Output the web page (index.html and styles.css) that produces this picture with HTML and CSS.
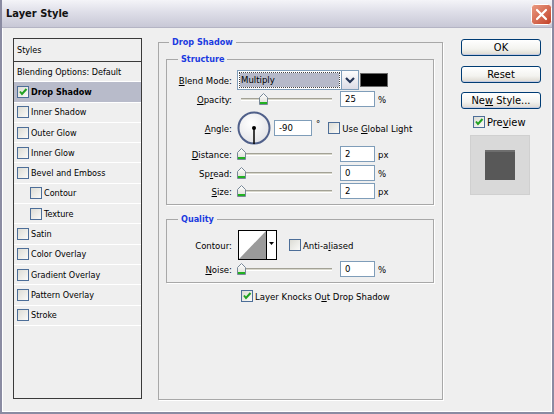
FILE: index.html
```html
<!DOCTYPE html>
<html lang="en">
<head>
    <meta charset="UTF-8">
    <title>Layer Style</title>
    <link rel="stylesheet" href="styles.css">
</head>
<body>
    <div class="window">
        <div class="titlebar">
            <span class="title">Layer Style</span>
            <svg class="close" width="21" height="21" viewBox="0 0 21 21">
                <defs>
                    <linearGradient id="cg" x1="0" y1="0" x2="1" y2="1">
                        <stop offset="0" stop-color="#eb9c84"/>
                        <stop offset="1" stop-color="#c23f26"/>
                    </linearGradient>
                </defs>
                <rect x="0.5" y="0.5" width="20" height="20" rx="3" fill="url(#cg)" stroke="#fff"/>
                <path d="M6 6 L15 15 M15 6 L6 15" stroke="#fff" stroke-width="2.2" stroke-linecap="round"/>
            </svg>
        </div>
        <div class="content">
            <div class="styles-list">
                <div class="list-head">Styles</div>
                <div class="item">Blending Options: Default</div>
                <div class="item selected"><span class="cb on"></span><b>Drop Shadow</b></div>
                <div class="item"><span class="cb"></span>Inner Shadow</div>
                <div class="item"><span class="cb"></span>Outer Glow</div>
                <div class="item"><span class="cb"></span>Inner Glow</div>
                <div class="item"><span class="cb"></span>Bevel and Emboss</div>
                <div class="item indent"><span class="cb"></span>Contour</div>
                <div class="item indent"><span class="cb"></span>Texture</div>
                <div class="item"><span class="cb"></span>Satin</div>
                <div class="item"><span class="cb"></span>Color Overlay</div>
                <div class="item"><span class="cb"></span>Gradient Overlay</div>
                <div class="item"><span class="cb"></span>Pattern Overlay</div>
                <div class="item"><span class="cb"></span>Stroke</div>
            </div>

            <fieldset class="group main">
                <legend>Drop Shadow</legend>

                <fieldset class="group sub structure">
                    <legend>Structure</legend>
                    <div class="row blend">
                        <span class="lbl"><u>B</u>lend Mode:</span>
                        <div class="select">
                            <div class="sel-field"><span class="sel-text">Multiply</span></div>
                            <div class="sel-btn">
                                <svg width="16" height="18" viewBox="0 0 16 18"><path d="M4 7 L8 11 L12 7" fill="none" stroke="#233456" stroke-width="2.2"/></svg>
                            </div>
                        </div>
                        <span class="swatch"></span>
                    </div>
                    <div class="row r-opacity">
                        <span class="lbl"><u>O</u>pacity:</span>
                        <div class="slider"><span class="track"></span><span class="thumb" style="left:22px"></span></div>
                        <span class="num">25</span><span class="unit">%</span>
                    </div>
                    <div class="row r-angle">
                        <span class="lbl"><u>A</u>ngle:</span>
                        <svg class="dial" width="34" height="34" viewBox="0 0 34 34">
                            <defs>
                                <radialGradient id="dg" cx="0.4" cy="0.35" r="0.7">
                                    <stop offset="0" stop-color="#ffffff"/>
                                    <stop offset="1" stop-color="#e2e2e6"/>
                                </radialGradient>
                            </defs>
                            <circle cx="17" cy="17" r="15.5" fill="url(#dg)" stroke="#50608a" stroke-width="2"/>
                            <line x1="17" y1="17" x2="17" y2="33" stroke="#000" stroke-width="1.5"/>
                            <circle cx="17" cy="17" r="2" fill="#000"/>
                        </svg>
                        <span class="num angle">-90</span><span class="deg">&deg;</span>
                        <span class="cb gap"></span><span class="cb-text">Use <u>G</u>lobal Light</span>
                    </div>
                    <div class="row r-distance">
                        <span class="lbl"><u>D</u>istance:</span>
                        <div class="slider"><span class="track"></span><span class="thumb" style="left:0"></span></div>
                        <span class="num">2</span><span class="unit">px</span>
                    </div>
                    <div class="row r-spread">
                        <span class="lbl">Sp<u>r</u>ead:</span>
                        <div class="slider"><span class="track"></span><span class="thumb" style="left:0"></span></div>
                        <span class="num">0</span><span class="unit">%</span>
                    </div>
                    <div class="row r-size">
                        <span class="lbl"><u>S</u>ize:</span>
                        <div class="slider"><span class="track"></span><span class="thumb" style="left:0"></span></div>
                        <span class="num">2</span><span class="unit">px</span>
                    </div>
                </fieldset>

                <fieldset class="group sub quality">
                    <legend>Quality</legend>
                    <div class="row r-contour">
                        <span class="lbl">Contour:</span>
                        <svg class="contour" width="39" height="30" viewBox="0 0 39 30">
                            <rect x="0.5" y="0.5" width="38" height="29" fill="#fff" stroke="#000"/>
                            <polygon points="1,29 28,1 28,29" fill="#9a9a9a"/>
                            <line x1="28.5" y1="0" x2="28.5" y2="30" stroke="#000"/>
                            <polygon points="31,12 36,12 33.5,15" fill="#000"/>
                        </svg>
                        <span class="cb gap-aa"></span><span class="cb-text">Anti-a<u>l</u>iased</span>
                    </div>
                    <div class="row r-noise">
                        <span class="lbl"><u>N</u>oise:</span>
                        <div class="slider"><span class="track"></span><span class="thumb" style="left:0"></span></div>
                        <span class="num">0</span><span class="unit">%</span>
                    </div>
                </fieldset>

                <div class="row knock">
                    <span class="cb on"></span><span class="cb-text">Layer Knocks O<u>u</u>t Drop Shadow</span>
                </div>
            </fieldset>

            <div class="side">
                <div class="btn default">OK</div>
                <div class="btn">Reset</div>
                <div class="btn">Ne<u>w</u> Style...</div>
                <div class="preview-row"><span class="cb on"></span><span>Pre<u>v</u>iew</span></div>
                <div class="preview"><span class="preview-square"></span></div>
            </div>
        </div>
    </div>
</body>
</html>
```
FILE: styles.css
```css
* {
    box-sizing: border-box;
}
body {
    margin: 0;
    font-family: "DejaVu Sans Condensed", "DejaVu Sans", sans-serif;
    font-stretch: condensed;
    font-size: 9.5px;
    color: #000;
    background: #efefef;
}
.window {
    width: 554px;
    height: 414px;
    border: 2px solid #8a8ba2;
    border-top: 0;
    background: #efefef;
    box-shadow: inset 1px 0 0 #fff, inset -1px -1px 0 #fff;
}
.titlebar {
    height: 28px;
    display: flex;
    align-items: center;
    justify-content: space-between;
    padding: 0 0 0 4px;
    background: linear-gradient(#f4f4f8, #dedee8 45%, #c8c8d6);
    border-bottom: 1px solid #b4b4c4;
}
.title {
    font-size: 11px;
    font-weight: bold;
    color: #111;
    margin-top: -1px;
}
.close {
    display: block;
    margin-top: 1px;
}
.content {
    display: flex;
    align-items: flex-start;
    padding: 10px 0 0 11px;
}

/* styles list */
.styles-list {
    width: 129px;
    height: 361px;
    border: 1px solid #3a3a3a;
    font-size: 9px;
    flex: none;
}
.list-head {
    height: 23px;
    line-height: 22px;
    padding-left: 3px;
    border-bottom: 1px solid #3a3a3a;
}
.item {
    height: 20.3px;
    display: flex;
    align-items: center;
    gap: 2px;
    padding-left: 3px;
    border-bottom: 1px solid #fff;
}
.item.indent {
    padding-left: 16px;
}
.item.selected {
    background: #b8bbca;
}

/* checkbox */
.cb {
    display: inline-block;
    flex: none;
    width: 12px;
    height: 12px;
    border: 1px solid #4d6e98;
    background: linear-gradient(135deg, #dcdcd5, #fafaf8);
}
.cb.on {
    background-image: url("data:image/svg+xml,%3Csvg xmlns='http://www.w3.org/2000/svg' width='10' height='10'%3E%3Cpath d='M2 4.5 L4 7 L8.5 2' fill='none' stroke='%2321a121' stroke-width='2'/%3E%3C/svg%3E"), linear-gradient(135deg, #dcdcd5, #fafaf8);
    background-repeat: no-repeat;
    background-position: center;
}
.cb-text {
    margin-left: 2px;
}

/* group boxes */
.group {
    margin: 0;
    padding: 0;
    min-width: 0;
    border: 1px solid #a8a8a8;
    box-shadow: 1px 1px 0 #fff;
}
.group legend {
    padding: 0 3px;
    line-height: 13px;
    font-weight: bold;
    font-size: 9px;
    color: #1a3ae0;
}
.main {
    width: 285px;
    height: 364px;
    margin: -2px 0 0 16px;
    padding: 0 8px 0 7px;
    flex: none;
}
.main > legend {
    margin-left: 3px;
}
.sub {
    width: 100%;
    margin-top: 4px;
    padding: 4px 0 5px;
}
.sub > legend {
    margin-left: 11px;
}
.quality {
    margin-top: 8px;
}

/* rows */
.row {
    display: flex;
    align-items: center;
}
.lbl {
    width: 65px;
    flex: none;
    text-align: right;
}
.blend {
    height: 20px;
}
.r-opacity, .r-distance, .r-noise {
    margin-top: 1px;
}
.r-angle {
    margin-top: 4px;
}
.r-spread {
    margin-top: 3px;
}
.r-size {
    margin-top: 2px;
}
.select {
    display: flex;
    margin-left: 5px;
}
.sel-field {
    width: 104px;
    height: 20px;
    padding: 2px;
    border: 1px solid #7f9db9;
    border-right: 0;
    background: #fff;
}
.sel-text {
    display: block;
    height: 100%;
    line-height: 14px;
    padding-left: 1px;
    background: #b6b9c9;
    outline: 1px dotted #444;
}
.sel-btn {
    width: 18px;
    height: 20px;
    border: 1px solid #7f9db9;
    background: linear-gradient(#fdfdfd, #dcdce6);
}
.sel-btn svg {
    display: block;
}
.swatch {
    width: 28px;
    height: 14px;
    margin-left: 1px;
    background: #000;
    border: 1px solid #6a6a6a;
}
.slider {
    position: relative;
    width: 98px;
    height: 16px;
    margin-left: 5px;
    flex: none;
}
.track {
    position: absolute;
    left: 4px;
    right: 3px;
    top: 7px;
    height: 3px;
    border-top: 1px solid #a3a296;
    border-bottom: 1px solid #fff;
    background: #d8d7cc;
}
.thumb {
    position: absolute;
    top: 2px;
    width: 9px;
    height: 12px;
    background: url("data:image/svg+xml,%3Csvg xmlns='http://www.w3.org/2000/svg' width='9' height='12'%3E%3Cdefs%3E%3ClinearGradient id='g' x1='0' y1='0' x2='0' y2='1'%3E%3Cstop offset='0' stop-color='%23ffffff'/%3E%3Cstop offset='1' stop-color='%23dcdcd4'/%3E%3C/linearGradient%3E%3C/defs%3E%3Cpath d='M0.5 4.5 L4.5 0.5 L8.5 4.5 L8.5 11.5 L0.5 11.5 Z' fill='url(%23g)' stroke='%23788898'/%3E%3Crect x='1' y='9' width='7' height='2' fill='%2321b121'/%3E%3C/svg%3E") no-repeat;
}
.num {
    width: 35px;
    height: 16px;
    margin-left: 5px;
    padding-left: 4px;
    line-height: 14px;
    border: 1px solid #7f9db9;
    background: #fff;
    flex: none;
}
.num.angle {
    width: 38px;
    margin-left: 3px;
}
.unit {
    margin-left: 3px;
}
.dial {
    display: block;
    margin-left: 5px;
    flex: none;
}
.deg {
    margin-left: 4px;
    align-self: flex-start;
    margin-top: 7px;
}
.cb.gap {
    margin-left: 8px;
}
.r-contour {
    height: 30px;
}
.contour {
    display: block;
    margin-left: 6px;
    flex: none;
}
.cb.gap-aa {
    margin-left: 12px;
}
.knock {
    margin-top: 7px;
    padding-left: 75px;
}

/* right column */
.side {
    display: flex;
    flex-direction: column;
    width: 80px;
    margin: 1px 0 0 18px;
    font-size: 11px;
    flex: none;
}
.btn {
    height: 17px;
    line-height: 15px;
    text-align: center;
    border: 1px solid #003c74;
    border-radius: 3px;
    background: linear-gradient(#ffffff, #f3f3ef 60%, #dcd8cf);
    box-shadow: inset 0 -1px 0 #c4cbe2;
}
.btn + .btn {
    margin-top: 10px;
}
.btn + .btn + .btn {
    margin-top: 9px;
}
.preview-row {
    display: flex;
    align-items: center;
    gap: 2px;
    height: 12px;
    margin-top: 7px;
    padding-left: 12px;
}
.preview {
    display: flex;
    align-items: center;
    justify-content: center;
    width: 60px;
    height: 60px;
    margin: 7px 0 0 9px;
    background: #d9d9d9;
    border: 1px solid #d0d0d0;
}
.preview-square {
    width: 30px;
    height: 30px;
    background: #585858;
    border-top: 2px solid #6e6e6e;
}
```
